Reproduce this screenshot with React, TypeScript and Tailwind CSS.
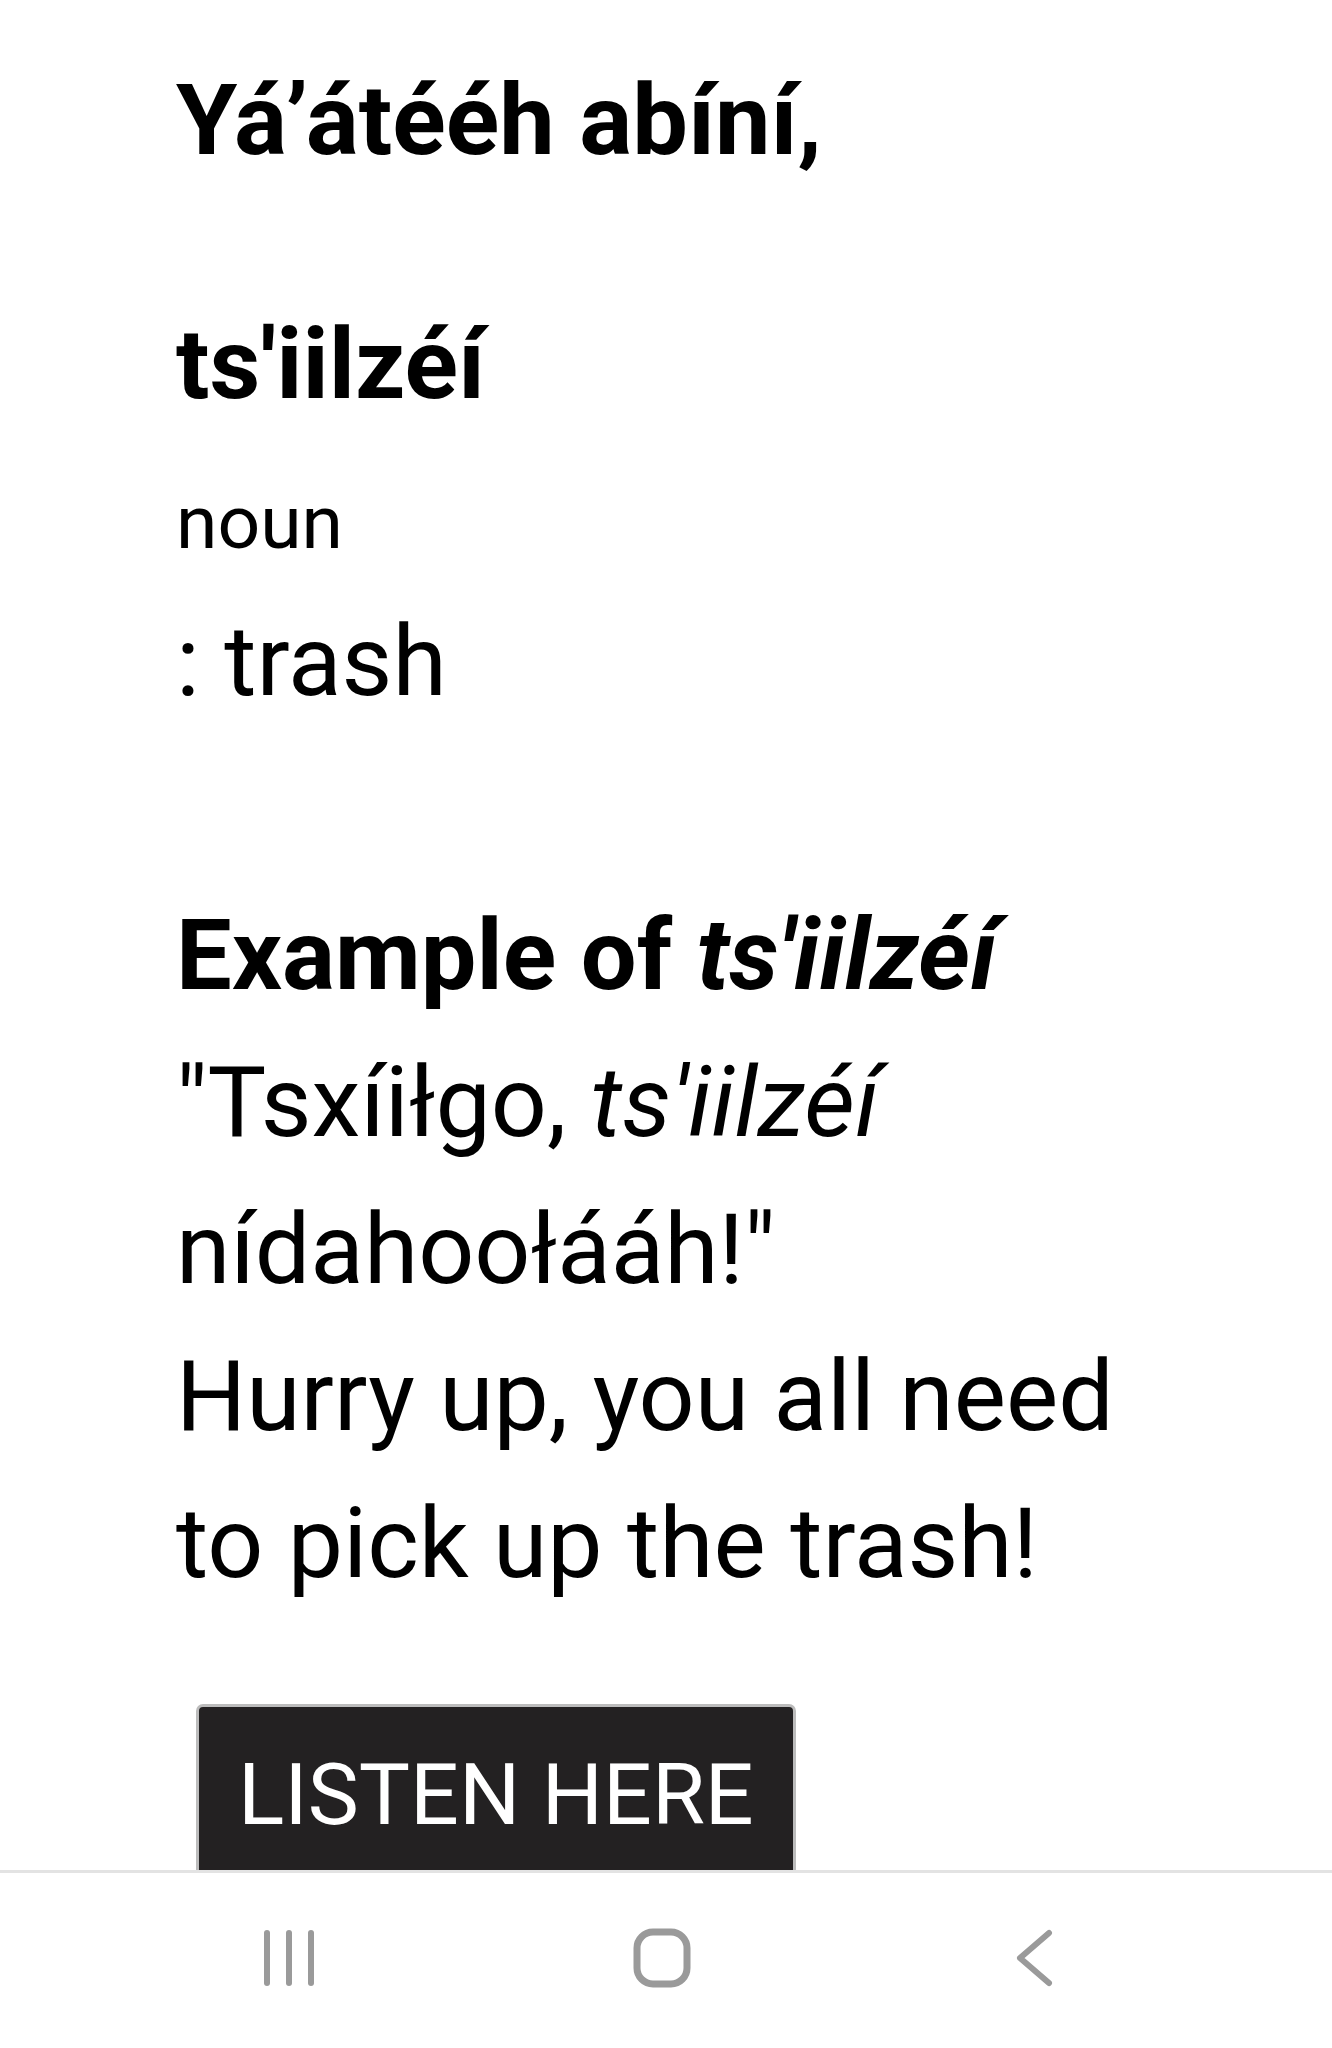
import React from "react";

export default function App() {
  return (
    <div
      className="w-[1332px] h-[2048px] bg-white text-black flex flex-col overflow-hidden"
      style={{ fontFamily: "Roboto, 'Liberation Sans', sans-serif" }}
    >
      <div className="flex-1 overflow-hidden pl-[176px] pt-[47px]">
        <h1 className="text-[99px] leading-[147px] font-bold">Yá’átééh abíní,</h1>
        <h2 className="mt-[97px] text-[99px] leading-[147px] font-bold">ts'iilzéí</h2>
        <p className="mt-[27px] text-[75px] leading-[115px]">noun</p>
        <p className="mt-[8px] text-[98.5px] leading-[147px]">: trash</p>
        <h3 className="mt-[147px] text-[99px] leading-[147px] font-bold">
          Example of <em className="italic">ts'iilzéí</em>
        </h3>
        <p className="text-[98.5px] leading-[147px]">
          "Tsxíiłgo, <em className="italic">ts'iilzéí</em>
          <br />
          nídahoołááh!"
        </p>
        <p className="text-[98.5px] leading-[147px]">
          Hurry up, you all need
          <br />
          to pick up the trash!
        </p>
        <div className="mt-[87px] ml-[20px]">
          <button className="w-[600px] border-[3px] border-[#bcbcbc] rounded-[7px] bg-[#232122] text-white text-left pl-[39px] pt-[37px] pb-[37px] text-[86px] leading-[102px] uppercase">
            Listen Here
          </button>
        </div>
      </div>
      <div className="h-[178px] shrink-0 bg-white border-t-[3px] border-[#e3e3e3] flex items-start pt-[55px] pl-[229px] gap-[253px]">
        <div className="w-[120px] h-[60px] flex items-center justify-center">
          <svg width="60" height="60" viewBox="0 0 60 60">
            <g stroke="#9a9a9a" strokeWidth="6" strokeLinecap="round">
              <line x1="8" y1="5" x2="8" y2="55" />
              <line x1="30" y1="5" x2="30" y2="55" />
              <line x1="52" y1="5" x2="52" y2="55" />
            </g>
          </svg>
        </div>
        <div className="w-[120px] h-[60px] flex items-center justify-center">
          <svg width="60" height="60" viewBox="0 0 60 60">
            <rect x="5" y="4" width="50" height="52" rx="16" fill="none" stroke="#9a9a9a" strokeWidth="7" />
          </svg>
        </div>
        <div className="w-[120px] h-[60px] flex items-center justify-center">
          <svg width="60" height="60" viewBox="0 0 60 60">
            <polyline points="44,5 15,30 44,55" fill="none" stroke="#9a9a9a" strokeWidth="6" strokeLinecap="round" strokeLinejoin="round" />
          </svg>
        </div>
      </div>
    </div>
  );
}
